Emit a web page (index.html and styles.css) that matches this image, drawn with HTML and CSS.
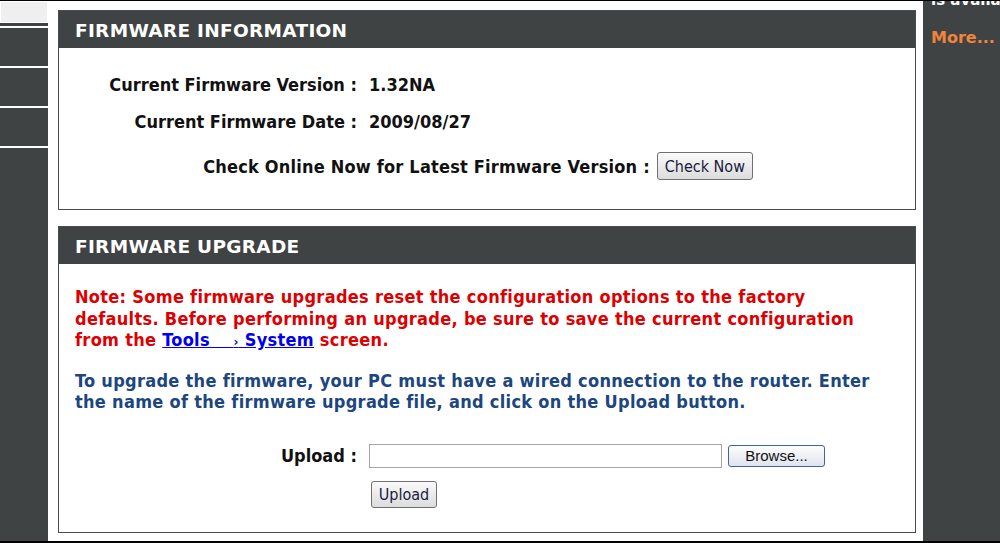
FILE: index.html
```html
<!DOCTYPE html>
<html lang="en">
<head>
  <meta charset="UTF-8" />
  <meta name="viewport" content="width=device-width, initial-scale=1.0"/>
  <title>Firmware</title>
  <link rel="stylesheet" href="styles.css">
</head>
<body>
  <div class="page">
    <div class="sidebar">
      <div class="nav-top"></div>
      <div class="nav-item"></div>
      <div class="nav-item"></div>
      <div class="nav-item"></div>
      <div class="nav-item rest"></div>
    </div>

    <div class="main">
      <!-- Firmware information -->
      <div class="box">
        <div class="box-head">FIRMWARE INFORMATION</div>
        <div class="box-body info">
          <div class="field-grid">
            <span class="label">Current Firmware Version :</span>
            <span class="value">1.32NA</span>
            <span class="label">Current Firmware Date :</span>
            <span class="value">2009/08/27</span>
          </div>
          <div class="check-row">
            <span>Check Online Now for Latest Firmware Version :</span>
            <button class="btn">Check Now</button>
          </div>
        </div>
      </div>

      <!-- Firmware upgrade -->
      <div class="box upgrade">
        <div class="box-head">FIRMWARE UPGRADE</div>
        <div class="box-body">
          <p class="note">Note: Some firmware upgrades reset the configuration options to the factory
            defaults. Before performing an upgrade, be sure to save the current configuration
            from the <a href="#" class="link">Tools &nbsp;&nbsp;&nbsp;<span class="sep">›</span> System</a> screen.</p>
          <p class="help">To upgrade the firmware, your PC must have a wired connection to the router. Enter
            the name of the firmware upgrade file, and click on the Upload button.</p>
          <div class="field-grid upload-grid">
            <span class="label">Upload :</span>
            <span class="file-row">
              <input type="text" class="file-input">
              <button class="btn browse">Browse...</button>
            </span>
            <span></span>
            <span><button class="btn upload">Upload</button></span>
          </div>
        </div>
      </div>
    </div>

    <div class="aside">
      <div class="cut">is available</div>
      <a href="#" class="more">More...</a>
    </div>
  </div>
</body>
</html>
```

FILE: styles.css
```css
html, body {
  margin: 0;
  padding: 0;
  background: #fff;
}

.page {
  width: 1000px;
  height: 543px;
  box-sizing: border-box;
  display: flex;
  border-top: 1px solid #000;
  border-bottom: 2px solid #000;
  overflow: hidden;
  font-family: "DejaVu Sans Condensed", Tahoma, "DejaVu Sans", sans-serif;
  font-weight: bold;
  font-size: 18px;
}

.page > div {
  flex-shrink: 0;
}

/* left menu */
.sidebar {
  width: 48px;
  background: #404343;
  display: flex;
  flex-direction: column;
}

.nav-top {
  height: 20px;
  margin-bottom: 3px;
  background: #efefef;
  border: 1px solid #fff;
}

.nav-item {
  height: 38px;
  border-top: 2px solid #fff;
}

.nav-item.rest {
  flex: 1;
}

/* content */
.main {
  width: 858px;
  margin-left: 10px;
  padding-top: 9px;
}

.box {
  border: 1px solid #4a4c4c;
  background: #fff;
}

.box.upgrade {
  margin-top: 16px;
  height: 305px;
}

.box-head {
  height: 37px;
  box-sizing: border-box;
  padding: 3px 0 0 16px;
  line-height: 34px;
  background: #404343;
  color: #fff;
  font-family: "DejaVu Sans", Verdana, sans-serif;
  font-size: 18.5px;
  letter-spacing: 0.3px;
}

.box-body {
  padding: 0 16px;
  color: #111;
}

.box-body.info {
  height: 161px;
  padding-top: 18px;
  box-sizing: border-box;
}

.field-grid {
  display: grid;
  grid-template-columns: 282px auto;
  column-gap: 12px;
  align-items: center;
}

.field-grid .label {
  text-align: right;
}

.info .field-grid span {
  line-height: 37px;
}

.check-row {
  display: flex;
  justify-content: center;
  align-items: center;
  gap: 7px;
  margin-top: 12px;
  padding-right: 18px;
  letter-spacing: 0.2px;
}

.btn {
  font-family: "DejaVu Sans Condensed", Tahoma, sans-serif;
  font-weight: normal;
  font-size: 16px;
  letter-spacing: 0;
  color: #1a1a40;
  background: linear-gradient(#fafafa, #dcdcdc);
  border: 1px solid #707070;
  border-radius: 3px;
  padding: 0 6px;
  height: 28px;
}

.check-row .btn {
  width: 96px;
}

.note {
  max-width: 800px;
  margin: 22px 0 0;
  line-height: 21.5px;
  letter-spacing: 0.3px;
  color: #dd0000;
}

.link {
  color: #0000ee;
  text-decoration: underline;
}

.sep {
  font-size: 13px;
  line-height: 1;
}

.help {
  max-width: 800px;
  margin: 19px 0 0;
  line-height: 21.5px;
  letter-spacing: 0.3px;
  color: #1c4680;
}

.upload-grid {
  margin-top: 31px;
  row-gap: 13px;
}

.file-row {
  display: flex;
  align-items: center;
  gap: 6px;
}

.file-input {
  width: 353px;
  height: 24px;
  box-sizing: border-box;
  border: 1px solid #a5a5a5;
  margin: 0;
}

.btn.browse {
  width: 97px;
  height: 22px;
  font-family: "Liberation Sans", Arial, sans-serif;
  font-size: 15px;
  color: #111;
  border: 1px solid #3c64a8;
  background: linear-gradient(#fdfdfd, #dfe3ec);
}

.btn.upload {
  width: 66px;
  height: 27px;
  margin-left: 2px;
  padding: 0;
}

/* right column */
.aside {
  width: 77px;
  margin-left: 7px;
  box-sizing: border-box;
  background: #404343;
  padding-left: 8px;
}

.cut {
  margin-top: -10px;
  color: #fff;
  font-family: "DejaVu Sans", sans-serif;
  font-size: 15px;
  white-space: nowrap;
}

.more {
  display: block;
  margin-top: 19px;
  color: #f0843c;
  text-decoration: none;
  font-family: "DejaVu Sans", sans-serif;
  font-size: 16px;
}
```
